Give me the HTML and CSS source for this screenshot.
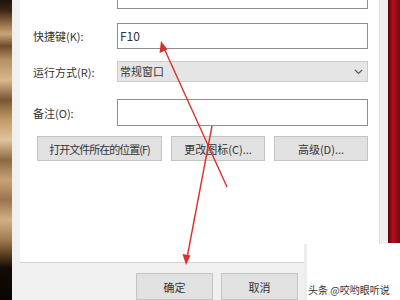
FILE: index.html
```html
<!DOCTYPE html>
<html lang="zh-CN">
<head>
  <meta charset="UTF-8">
  <meta name="viewport" content="width=device-width, initial-scale=1.0">
  <title>快捷方式属性</title>
  <link rel="stylesheet" href="styles.css">
</head>
<body>
  <div class="screen">
    <div class="wood"></div>

    <div class="dialog">
      <div class="panel">
        <div class="row row-top">
          <span class="label"></span>
          <div class="field"></div>
        </div>
        <div class="row row-key">
          <span class="label">快捷键(K):</span>
          <div class="field">F10</div>
        </div>
        <div class="row row-run">
          <span class="label">运行方式(R):</span>
          <div class="field select">
            <span>常规窗口</span>
            <svg class="chevron" width="9" height="6" viewBox="0 0 9 6"><path d="M1 1l3.5 3.5L8 1" fill="none" stroke="#555" stroke-width="1.1"/></svg>
          </div>
        </div>
        <div class="row row-note">
          <span class="label">备注(O):</span>
          <div class="field"></div>
        </div>
        <div class="actions">
          <button class="btn btn-wide">打开文件所在的位置(F)</button>
          <button class="btn">更改图标(C)...</button>
          <button class="btn">高级(D)...</button>
        </div>
      </div>
      <div class="footer">
        <button class="btn btn-foot">确定</button>
        <button class="btn btn-foot">取消</button>
      </div>
    </div>

    <div class="rose"></div>

    <div class="watermark">头条 @咬哟眼听说</div>

    <svg class="arrows" width="400" height="300" viewBox="0 0 400 300">
      <g stroke="#d8312c" stroke-width="1.4" fill="#d8312c">
        <line x1="227" y1="187" x2="163" y2="46"/>
        <path d="M161 41l-1.5 12 8-3.5z" stroke="none"/>
        <line x1="212" y1="126" x2="187" y2="258"/>
        <path d="M186 265l-3.5-11 8 1.5z" stroke="none"/>
      </g>
    </svg>
  </div>
</body>
</html>
```

FILE: styles.css
```css
body {
  margin: 0;
  font-family: "Noto Sans CJK SC", "Liberation Sans", sans-serif;
  font-size: 11px;
  color: #333;
}

.screen {
  position: relative;
  display: flex;
  width: 400px;
  height: 300px;
  overflow: hidden;
  background: #fff;
}

.wood {
  width: 12px;
  flex: none;
  background: linear-gradient(to bottom,
    #1e130c 0, #3a2414 10px, #8a6440 22px, #c9a578 34px, #6e4c2c 46px,
    #b89064 60px, #d8b88c 80px, #7a5634 100px, #c29a6a 120px, #e0c49c 140px,
    #8c6844 160px, #c8a274 180px, #9a7450 200px, #d2b084 220px, #a07a52 240px,
    #5a3c22 255px, #120b06 268px, #0a0604 300px);
}

.dialog {
  width: 376px;
  flex: none;
  display: flex;
  flex-direction: column;
  background: #f0f0f0;
}

.panel {
  margin-left: 8px;
  width: 360px;
  height: 264px;
  padding-left: 13px;
  box-sizing: border-box;
  background: #fff;
  border-right: 1px solid #dedede;
  border-bottom: 1px solid #d4d4d4;
  display: flex;
  flex-direction: column;
}

.row {
  display: flex;
  align-items: center;
}

.label {
  width: 84px;
  flex: none;
}

.field {
  width: 251px;
  height: 26px;
  box-sizing: border-box;
  border: 1px solid #8e8e8e;
  padding-left: 2px;
  display: flex;
  align-items: center;
  line-height: 1;
  font-size: 12px;
}

.row-top {
  margin-top: -17px;
}

.row-key {
  margin-top: 14px;
}

.row-run {
  margin-top: 12px;
}

.row-run .field {
  height: 21px;
}

.select {
  background: #e5e5e5;
  border-color: #cbcbcb;
  justify-content: space-between;
  padding-right: 4px;
  font-size: 11px;
}

.row-note {
  margin-top: 17px;
}

.row-note .field {
  height: 27px;
}

.actions {
  display: flex;
  gap: 9px;
  margin-top: 10px;
  margin-left: 4px;
}

.btn {
  width: 94px;
  height: 25px;
  padding: 0;
  font-family: inherit;
  font-size: 11px;
  color: #333;
  background: #e1e1e1;
  border: 1px solid #c4c4c4;
  border-radius: 0;
  white-space: nowrap;
}

.btn-wide {
  width: 125px;
  letter-spacing: -1px;
}

.footer {
  display: flex;
  gap: 8px;
  padding-left: 124px;
  padding-top: 10px;
}

.btn-foot {
  width: 77px;
  height: 27px;
}

.rose {
  width: 12px;
  height: 243px;
  flex: none;
  background: linear-gradient(to right, #5a0408, #b0101c 40%, #7a0810),
    #8a0a12;
}

.watermark {
  position: absolute;
  left: 304px;
  top: 244px;
  width: 96px;
  height: 56px;
  box-sizing: border-box;
  background: #fff;
  border-left: 3px solid #ececec;
  padding: 40px 0 0 1px;
  font-size: 10px;
  line-height: 12px;
  white-space: nowrap;
}

.arrows {
  position: absolute;
  left: 0;
  top: 0;
}
```
